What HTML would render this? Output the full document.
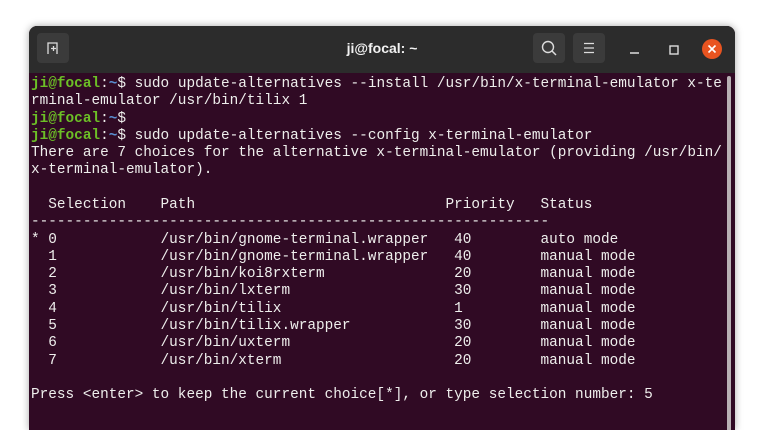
<!DOCTYPE html>
<html><head><meta charset="utf-8"><style>
html,body{margin:0;padding:0;width:768px;height:430px;overflow:hidden;background:#fff;}
.win{position:absolute;left:29px;top:26px;width:706px;height:404px;border-radius:8px 8px 0 0;overflow:hidden;box-shadow:0 0 8px rgba(0,0,0,.35);background:#300a24;}
.hdr{position:absolute;left:0;top:0;width:706px;height:47px;background:#2c2c2c;}
.btn{position:absolute;top:7px;width:32px;height:30px;background:#3b3b3b;border-radius:4px;}
.title{position:absolute;left:0;width:706px;top:14px;text-align:center;color:#f2f2f2;font:bold 14px "Liberation Sans",sans-serif;}
pre{position:absolute;left:2px;top:50px;margin:0;font:14.4px/17.28px "Liberation Mono",monospace;color:#eeeeec;}
.g{color:#6cbf26;font-weight:bold}.b{color:#5a8fd0;font-weight:bold}
.sb{position:absolute;left:698px;top:50px;width:4px;height:380px;background:#b8b0b4;border-radius:2px;}
</style></head><body>
<div class="win">
<div class="hdr">
<div class="btn" style="left:8px"><svg width="32" height="30"><path d="M11 21V10h9v11M14 15.5h5M16.5 13v5" stroke="#ddd" stroke-width="1.3" fill="none"/></svg></div>
<div class="title">ji@focal: ~</div>
<div class="btn" style="left:504px"><svg width="32" height="30"><circle cx="15" cy="14" r="5.5" stroke="#ddd" stroke-width="1.4" fill="none"/><path d="M19 18l4 4" stroke="#ddd" stroke-width="1.5"/></svg></div>
<div class="btn" style="left:544px"><svg width="32" height="30"><path d="M11 10.5h10M11 15h10M11 19.5h10" stroke="#ddd" stroke-width="1.3"/></svg></div>
<svg style="position:absolute;left:595px;top:10px" width="100" height="26"><path d="M6 17h9" stroke="#ddd" stroke-width="1.5"/><rect x="46" y="10" width="8" height="8" stroke="#ddd" stroke-width="1.4" fill="none"/><circle cx="88" cy="13" r="10" fill="#e95420"/><path d="M84.5 9.5l7 7M91.5 9.5l-7 7" stroke="#fff" stroke-width="1.6"/></svg>
</div>
<pre><span class="g">ji@focal</span>:<span class="b">~</span>$ sudo update-alternatives --install /usr/bin/x-terminal-emulator x-te
rminal-emulator /usr/bin/tilix 1
<span class="g">ji@focal</span>:<span class="b">~</span>$
<span class="g">ji@focal</span>:<span class="b">~</span>$ sudo update-alternatives --config x-terminal-emulator
There are 7 choices for the alternative x-terminal-emulator (providing /usr/bin/
x-terminal-emulator).

  Selection    Path                             Priority   Status
------------------------------------------------------------
* 0            /usr/bin/gnome-terminal.wrapper   40        auto mode
  1            /usr/bin/gnome-terminal.wrapper   40        manual mode
  2            /usr/bin/koi8rxterm               20        manual mode
  3            /usr/bin/lxterm                   30        manual mode
  4            /usr/bin/tilix                    1         manual mode
  5            /usr/bin/tilix.wrapper            30        manual mode
  6            /usr/bin/uxterm                   20        manual mode
  7            /usr/bin/xterm                    20        manual mode

Press &lt;enter&gt; to keep the current choice[*], or type selection number: 5</pre>
<div class="sb"></div>
</div>
</body></html>
